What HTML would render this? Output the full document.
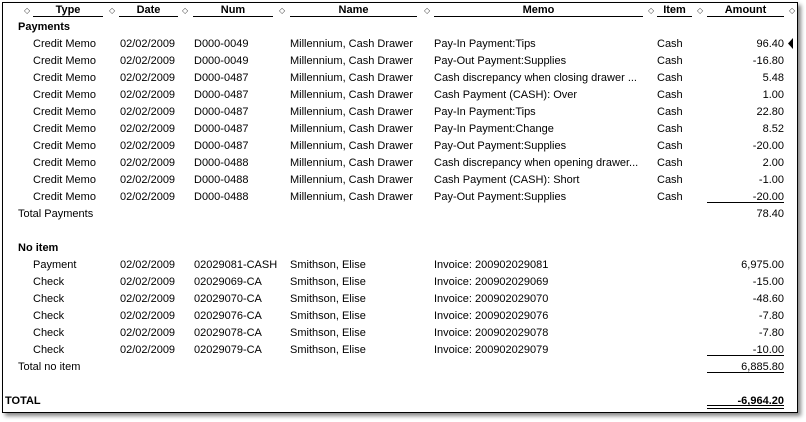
<!DOCTYPE html>
<html><head><style>
body{margin:0;width:806px;height:422px;background:#fff;position:relative;overflow:hidden;font-family:"Liberation Sans",Arial,sans-serif;font-size:11px;color:#000}
.frame{position:absolute;left:2px;top:2px;width:794px;height:409px;border:1px solid #000;box-shadow:3px 3px 4px #888;background:#fff}
.t{position:absolute;white-space:nowrap;line-height:13px;margin-top:1px}
.r{text-align:right}
.h{font-weight:bold}
.u{position:absolute;height:1px;background:#000}
.d{position:absolute;font-size:8px;color:#444;line-height:13px;margin-top:1px}
</style></head><body>
<div class="frame"></div>
<div class="d" style="left:24px;top:3px">◇</div>
<div class="t h" style="left:33px;top:3px;width:70px;text-align:center">Type</div><div class="u" style="left:33px;top:16px;width:70px"></div>
<div class="d" style="left:109px;top:3px">◇</div>
<div class="t h" style="left:119px;top:3px;width:59px;text-align:center">Date</div><div class="u" style="left:119px;top:16px;width:59px"></div>
<div class="d" style="left:182px;top:3px">◇</div>
<div class="t h" style="left:193px;top:3px;width:80px;text-align:center">Num</div><div class="u" style="left:193px;top:16px;width:80px"></div>
<div class="d" style="left:279px;top:3px">◇</div>
<div class="t h" style="left:290px;top:3px;width:127px;text-align:center">Name</div><div class="u" style="left:290px;top:16px;width:127px"></div>
<div class="d" style="left:424px;top:3px">◇</div>
<div class="t h" style="left:434px;top:3px;width:209px;text-align:center">Memo</div><div class="u" style="left:434px;top:16px;width:209px"></div>
<div class="d" style="left:648px;top:3px">◇</div>
<div class="t h" style="left:657px;top:3px;width:35px;text-align:center">Item</div><div class="u" style="left:657px;top:16px;width:35px"></div>
<div class="d" style="left:697px;top:3px">◇</div>
<div class="t h" style="left:707px;top:3px;width:77px;text-align:center">Amount</div><div class="u" style="left:707px;top:16px;width:77px"></div>
<div class="d" style="left:789px;top:3px">◇</div>

<div class="t h" style="left:18px;top:20px">Payments</div>
<svg style="position:absolute;left:788px;top:38px" width="6" height="11"><path d="M5 0V11L0 5.5Z" fill="#000"/></svg>

<div class="t" style="left:33px;top:37px">Credit Memo</div><div class="t" style="left:120px;top:37px">02/02/2009</div><div class="t" style="left:194px;top:37px">D000-0049</div><div class="t" style="left:290px;top:37px">Millennium, Cash Drawer</div><div class="t" style="left:434px;top:37px">Pay-In Payment:Tips</div><div class="t" style="left:657px;top:37px">Cash</div><div class="t r" style="left:700px;width:84px;top:37px">96.40</div>
<div class="t" style="left:33px;top:54px">Credit Memo</div><div class="t" style="left:120px;top:54px">02/02/2009</div><div class="t" style="left:194px;top:54px">D000-0049</div><div class="t" style="left:290px;top:54px">Millennium, Cash Drawer</div><div class="t" style="left:434px;top:54px">Pay-Out Payment:Supplies</div><div class="t" style="left:657px;top:54px">Cash</div><div class="t r" style="left:700px;width:84px;top:54px">-16.80</div>
<div class="t" style="left:33px;top:71px">Credit Memo</div><div class="t" style="left:120px;top:71px">02/02/2009</div><div class="t" style="left:194px;top:71px">D000-0487</div><div class="t" style="left:290px;top:71px">Millennium, Cash Drawer</div><div class="t" style="left:434px;top:71px">Cash discrepancy when closing drawer ...</div><div class="t" style="left:657px;top:71px">Cash</div><div class="t r" style="left:700px;width:84px;top:71px">5.48</div>
<div class="t" style="left:33px;top:88px">Credit Memo</div><div class="t" style="left:120px;top:88px">02/02/2009</div><div class="t" style="left:194px;top:88px">D000-0487</div><div class="t" style="left:290px;top:88px">Millennium, Cash Drawer</div><div class="t" style="left:434px;top:88px">Cash Payment (CASH): Over</div><div class="t" style="left:657px;top:88px">Cash</div><div class="t r" style="left:700px;width:84px;top:88px">1.00</div>
<div class="t" style="left:33px;top:105px">Credit Memo</div><div class="t" style="left:120px;top:105px">02/02/2009</div><div class="t" style="left:194px;top:105px">D000-0487</div><div class="t" style="left:290px;top:105px">Millennium, Cash Drawer</div><div class="t" style="left:434px;top:105px">Pay-In Payment:Tips</div><div class="t" style="left:657px;top:105px">Cash</div><div class="t r" style="left:700px;width:84px;top:105px">22.80</div>
<div class="t" style="left:33px;top:122px">Credit Memo</div><div class="t" style="left:120px;top:122px">02/02/2009</div><div class="t" style="left:194px;top:122px">D000-0487</div><div class="t" style="left:290px;top:122px">Millennium, Cash Drawer</div><div class="t" style="left:434px;top:122px">Pay-In Payment:Change</div><div class="t" style="left:657px;top:122px">Cash</div><div class="t r" style="left:700px;width:84px;top:122px">8.52</div>
<div class="t" style="left:33px;top:139px">Credit Memo</div><div class="t" style="left:120px;top:139px">02/02/2009</div><div class="t" style="left:194px;top:139px">D000-0487</div><div class="t" style="left:290px;top:139px">Millennium, Cash Drawer</div><div class="t" style="left:434px;top:139px">Pay-Out Payment:Supplies</div><div class="t" style="left:657px;top:139px">Cash</div><div class="t r" style="left:700px;width:84px;top:139px">-20.00</div>
<div class="t" style="left:33px;top:156px">Credit Memo</div><div class="t" style="left:120px;top:156px">02/02/2009</div><div class="t" style="left:194px;top:156px">D000-0488</div><div class="t" style="left:290px;top:156px">Millennium, Cash Drawer</div><div class="t" style="left:434px;top:156px">Cash discrepancy when opening drawer...</div><div class="t" style="left:657px;top:156px">Cash</div><div class="t r" style="left:700px;width:84px;top:156px">2.00</div>
<div class="t" style="left:33px;top:173px">Credit Memo</div><div class="t" style="left:120px;top:173px">02/02/2009</div><div class="t" style="left:194px;top:173px">D000-0488</div><div class="t" style="left:290px;top:173px">Millennium, Cash Drawer</div><div class="t" style="left:434px;top:173px">Cash Payment (CASH): Short</div><div class="t" style="left:657px;top:173px">Cash</div><div class="t r" style="left:700px;width:84px;top:173px">-1.00</div>
<div class="t" style="left:33px;top:190px">Credit Memo</div><div class="t" style="left:120px;top:190px">02/02/2009</div><div class="t" style="left:194px;top:190px">D000-0488</div><div class="t" style="left:290px;top:190px">Millennium, Cash Drawer</div><div class="t" style="left:434px;top:190px">Pay-Out Payment:Supplies</div><div class="t" style="left:657px;top:190px">Cash</div><div class="t r" style="left:700px;width:84px;top:190px">-20.00</div>
<div class="u" style="left:707px;top:202px;width:77px"></div>
<div class="t" style="left:18px;top:207px">Total Payments</div><div class="t r" style="left:700px;width:84px;top:207px">78.40</div>

<div class="t h" style="left:18px;top:241px">No item</div>
<div class="t" style="left:33px;top:258px">Payment</div><div class="t" style="left:120px;top:258px">02/02/2009</div><div class="t" style="left:194px;top:258px">02029081-CASH</div><div class="t" style="left:290px;top:258px">Smithson, Elise</div><div class="t" style="left:434px;top:258px">Invoice: 200902029081</div><div class="t r" style="left:700px;width:84px;top:258px">6,975.00</div>
<div class="t" style="left:33px;top:275px">Check</div><div class="t" style="left:120px;top:275px">02/02/2009</div><div class="t" style="left:194px;top:275px">02029069-CA</div><div class="t" style="left:290px;top:275px">Smithson, Elise</div><div class="t" style="left:434px;top:275px">Invoice: 200902029069</div><div class="t r" style="left:700px;width:84px;top:275px">-15.00</div>
<div class="t" style="left:33px;top:292px">Check</div><div class="t" style="left:120px;top:292px">02/02/2009</div><div class="t" style="left:194px;top:292px">02029070-CA</div><div class="t" style="left:290px;top:292px">Smithson, Elise</div><div class="t" style="left:434px;top:292px">Invoice: 200902029070</div><div class="t r" style="left:700px;width:84px;top:292px">-48.60</div>
<div class="t" style="left:33px;top:309px">Check</div><div class="t" style="left:120px;top:309px">02/02/2009</div><div class="t" style="left:194px;top:309px">02029076-CA</div><div class="t" style="left:290px;top:309px">Smithson, Elise</div><div class="t" style="left:434px;top:309px">Invoice: 200902029076</div><div class="t r" style="left:700px;width:84px;top:309px">-7.80</div>
<div class="t" style="left:33px;top:326px">Check</div><div class="t" style="left:120px;top:326px">02/02/2009</div><div class="t" style="left:194px;top:326px">02029078-CA</div><div class="t" style="left:290px;top:326px">Smithson, Elise</div><div class="t" style="left:434px;top:326px">Invoice: 200902029078</div><div class="t r" style="left:700px;width:84px;top:326px">-7.80</div>
<div class="t" style="left:33px;top:343px">Check</div><div class="t" style="left:120px;top:343px">02/02/2009</div><div class="t" style="left:194px;top:343px">02029079-CA</div><div class="t" style="left:290px;top:343px">Smithson, Elise</div><div class="t" style="left:434px;top:343px">Invoice: 200902029079</div><div class="t r" style="left:700px;width:84px;top:343px">-10.00</div>
<div class="u" style="left:707px;top:355px;width:77px"></div>
<div class="t" style="left:18px;top:360px">Total no item</div><div class="t r" style="left:700px;width:84px;top:360px">6,885.80</div>
<div class="u" style="left:707px;top:372px;width:77px"></div>

<div class="t h" style="left:5px;top:394px">TOTAL</div><div class="t r h" style="left:700px;width:84px;top:394px">-6,964.20</div>
<div class="u" style="left:707px;top:405px;width:77px"></div>
<div class="u" style="left:707px;top:408px;width:77px"></div>
</body></html>
